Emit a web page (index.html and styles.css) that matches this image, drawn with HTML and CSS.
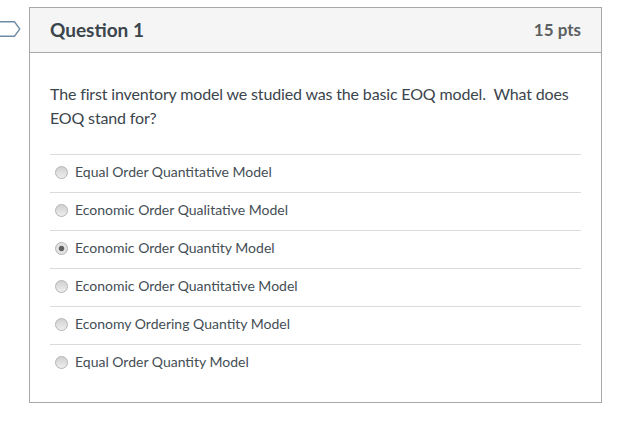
FILE: index.html
```html
<!DOCTYPE html>
<html lang="en">
<head>
    <meta charset="UTF-8">
    <meta name="viewport" content="width=device-width, initial-scale=1.0">
    <title>Question 1</title>
    <link rel="stylesheet" href="styles.css">
</head>
<body>
    <div class="quiz-row">
        <div class="flag-col">
            <svg class="flag" width="21" height="16" viewBox="0 0 21 16">
                <path d="M-2 .75H14.5L19.8 8 14.5 15.25H-2" fill="#fff" stroke="#6f8ba5" stroke-width="1.3"/>
            </svg>
        </div>
        <div class="question">
            <div class="question-header">
                <h2>Question 1</h2>
                <span class="pts">15 pts</span>
            </div>
            <div class="question-body">
                <p class="question-text">The first inventory model we studied was the basic EOQ model.&nbsp; What does EOQ stand for?</p>
                <div class="answers">
                    <div class="answer"><span class="radio"></span>Equal Order Quantitative Model</div>
                    <div class="answer"><span class="radio"></span>Economic Order Qualitative Model</div>
                    <div class="answer"><span class="radio checked"></span>Economic Order Quantity Model</div>
                    <div class="answer"><span class="radio"></span>Economic Order Quantitative Model</div>
                    <div class="answer"><span class="radio"></span>Economy Ordering Quantity Model</div>
                    <div class="answer"><span class="radio"></span>Equal Order Quantity Model</div>
                </div>
            </div>
        </div>
    </div>
</body>
</html>
```

FILE: styles.css
```css
body {
    margin: 0;
    background-color: #fff;
    font-family: Lato, "Open Sans", sans-serif;
    color: #3b454c;
}
.quiz-row {
    display: flex;
    padding-top: 7px;
}
.flag-col {
    width: 29px;
    padding-top: 14px;
}
.flag {
    display: block;
}
.question {
    width: 573px;
    height: 396px;
    border: 1px solid #a8a8a8;
    box-sizing: border-box;
}
.question-header {
    display: flex;
    justify-content: space-between;
    align-items: center;
    height: 45px;
    padding: 0 20px 2px;
    box-sizing: border-box;
    background-color: #f5f5f5;
    border-bottom: 1px solid #a8a8a8;
}
.question-header h2 {
    margin: 0;
    font-size: 19px;
    font-weight: 700;
}
.pts {
    font-size: 17px;
    font-weight: 700;
    color: #5c5f61;
}
.question-body {
    padding: 29px 20px 0;
}
.question-text {
    margin: 0 0 24px;
    font-size: 16px;
    line-height: 24px;
    letter-spacing: -0.15px;
}
.answers {
    border-top: 1px solid #d9dcdd;
}
.answer {
    display: flex;
    align-items: center;
    height: 38px;
    padding: 0 0 4px 5px;
    box-sizing: border-box;
    font-size: 14px;
    color: #444e55;
    border-bottom: 1px solid #d9dcdd;
}
.answer:last-child {
    border-bottom-color: transparent;
}
.radio {
    box-sizing: border-box;
    width: 13px;
    height: 13px;
    margin: 2px 7px 0 0;
    border: 1px solid #b4b4b4;
    border-radius: 50%;
    background: linear-gradient(#d0d0d0, #eeeeee);
}
.radio.checked {
    background: radial-gradient(circle, #606060 0, #606060 2.2px, #e2e2e2 3.2px);
}
```
